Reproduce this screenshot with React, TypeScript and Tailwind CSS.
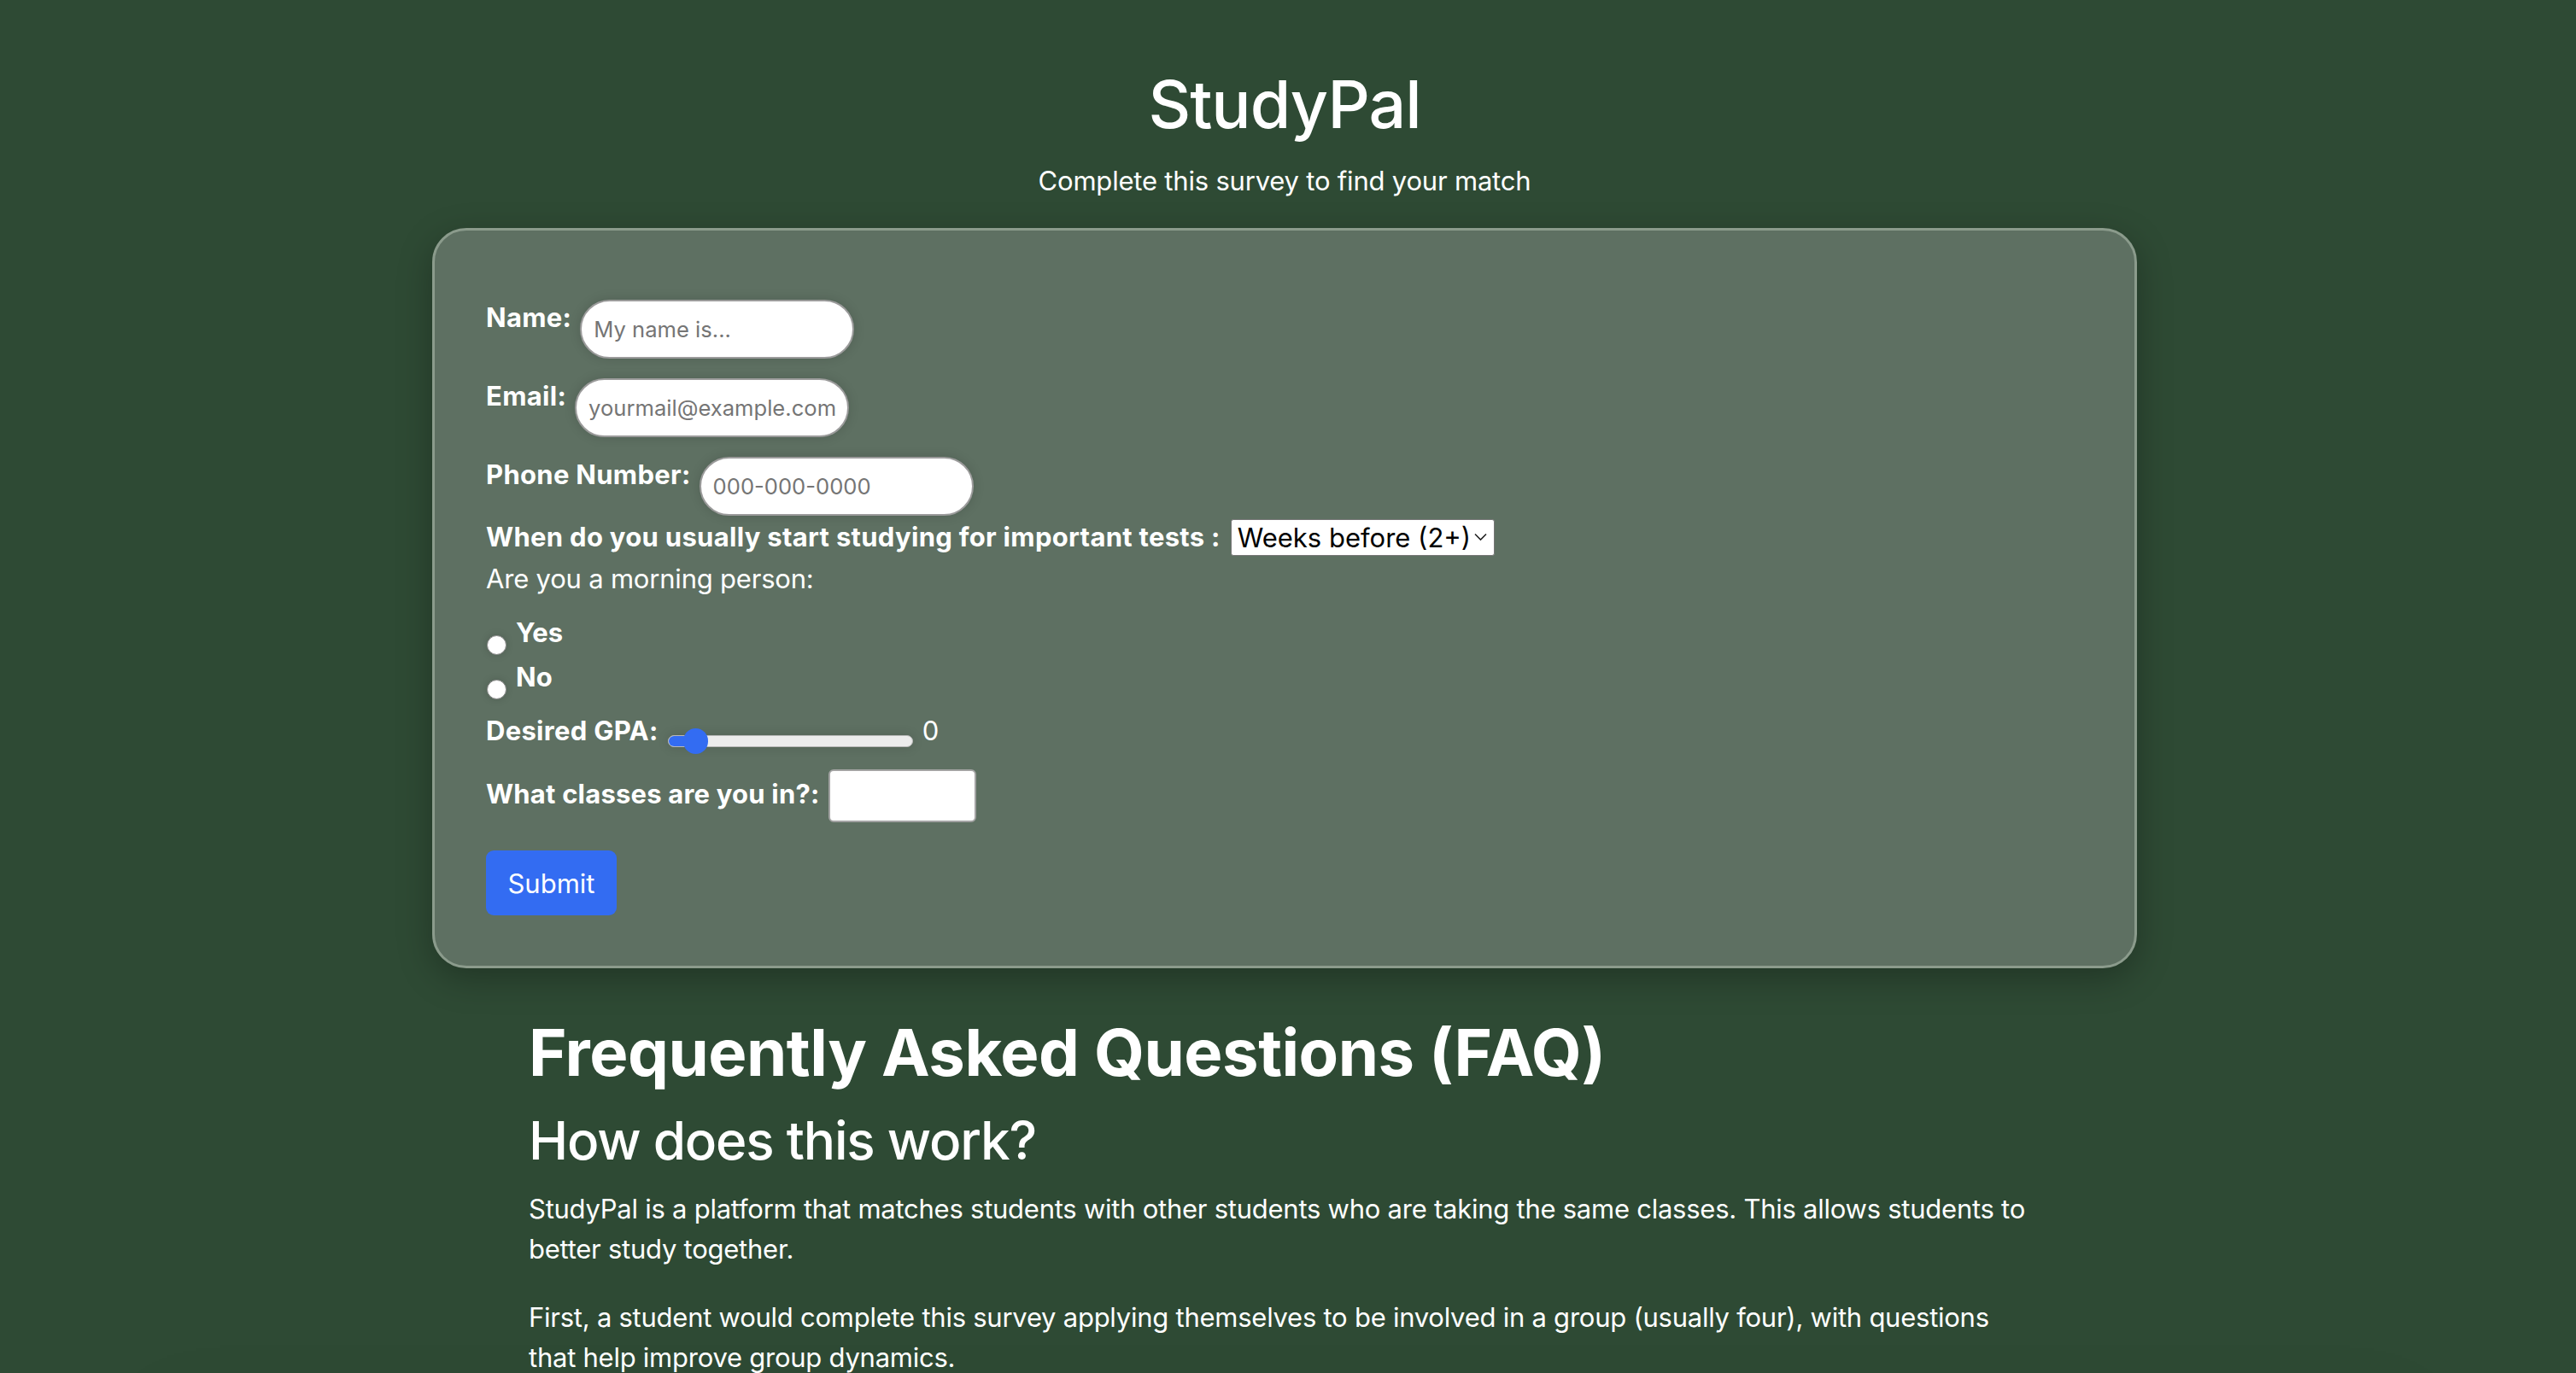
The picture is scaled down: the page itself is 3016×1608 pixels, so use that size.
import React from "react";

const inputCls =
  "h-[69px] w-[321px] rounded-full border-2 border-[#9b9b9b] bg-white px-[14px] text-[25.6px] text-black placeholder:text-[#757575] shadow-[0_0_14px_rgba(0,0,0,0.14)] outline-none";

const FormRow = ({ label, children }: { label: string; children: React.ReactNode }) => (
  <div className="flex items-start gap-[10px]">
    <label className="font-bold leading-[46px] tracking-[0.3px]">{label}</label>
    <div className="mt-[2px]">{children}</div>
  </div>
);

const Radio = ({ label }: { label: string }) => (
  <label className="flex h-[46px] items-start gap-[11px] leading-[46px] font-bold">
    <input
      type="radio"
      name="morning"
      className="mt-[26px] ml-[1px] h-[23px] w-[23px] appearance-none rounded-full border border-[#8a8a8a] bg-white shadow-[0_0_10px_rgba(0,0,0,0.15)]"
    />
    {label}
  </label>
);

const App = () => {
  return (
    <div className="min-h-screen overflow-hidden bg-[#2e4a34] pr-[8px] pb-[120px] text-white font-['Inter',sans-serif] text-[31px]">
      <header className="pt-[84px] text-center">
        <h1 className="text-[77px] font-medium leading-none tracking-[-1px]">StudyPal</h1>
        <p className="mt-[35px] leading-none tracking-[-0.2px]">Complete this survey to find your match</p>
      </header>

      <form className="mx-auto mt-[40px] flex w-[1996px] flex-col rounded-[40px] border-[3px] border-[#8b9b8c] bg-[#5e7062] pl-[60px] pt-[79px] pb-[59px] shadow-[0_12px_40px_rgba(0,0,0,0.28)]">
        <div className="flex flex-col gap-[21px]">
          <FormRow label="Name:">
            <input type="text" placeholder="My name is..." className={inputCls} />
          </FormRow>
          <FormRow label="Email:">
            <input type="email" placeholder="yourmail@example.com" className={inputCls} />
          </FormRow>
          <FormRow label="Phone Number:">
            <input type="tel" placeholder="000-000-0000" className={inputCls} />
          </FormRow>
        </div>

        <div className="mt-[2px] flex items-center gap-[12px]">
          <label className="font-bold leading-[46px] tracking-[0.3px]">
            When do you usually start studying for important tests :
          </label>
          <div className="flex h-[43px] w-[309px] items-center justify-between rounded-[3px] border border-[#767676] bg-white pl-[7px] pr-[8px] text-black">
            <span className="leading-none">Weeks before (2+)</span>
            <svg width="15" height="10" viewBox="0 0 15 10" fill="none">
              <path d="M1 1.5 7.5 8 14 1.5" stroke="#222" strokeWidth="1.6" />
            </svg>
          </div>
        </div>

        <p className="mt-[3px] leading-[46px] tracking-[-0.2px]">Are you a morning person:</p>

        <div className="mt-[17px] flex flex-col gap-[6px]">
          <Radio label="Yes" />
          <Radio label="No" />
        </div>

        <div className="mt-[17px] flex items-start gap-[11px]">
          <label className="font-bold leading-[46px] tracking-[0.3px]">Desired GPA:</label>
          <div className="relative mt-[28px] h-[14px] w-[287px] rounded-full border border-[#b9b9b9] bg-[#ececec] shadow-[0_0_14px_rgba(0,0,0,0.14)]">
            <div className="h-full w-[30px] rounded-l-full bg-[#336cf2]" />
            <div className="absolute left-[17px] top-[-9px] h-[30px] w-[29px] rounded-full bg-[#336cf2]" />
          </div>
          <span className="leading-[46px]">0</span>
        </div>

        <div className="mt-[22px] flex items-start gap-[10px]">
          <label className="mt-[6px] font-bold leading-[46px] tracking-[0.2px]">What classes are you in?:</label>
          <input
            type="text"
            className="h-[62px] w-[173px] rounded-[6px] border-2 border-[#a3a3a3] bg-white px-[8px] text-[25.6px] text-black outline-none"
          />
        </div>

        <button
          type="button"
          className="mt-[33px] h-[76px] w-[153px] rounded-[9px] bg-[#336cf2] leading-none text-white"
        >
          Submit
        </button>
      </form>

      <section className="mx-auto w-[1770px] tracking-[-0.25px]">
        <h1 className="mt-[60px] text-[76px] font-bold leading-none tracking-[-0.5px]">
          Frequently Asked Questions (FAQ)
        </h1>
        <h2 className="mt-[35px] text-[62px] font-medium leading-none tracking-[-1.2px]">How does this work?</h2>
        <p className="mt-[25px] leading-[47px]">
          StudyPal is a platform that matches students with other students who are taking the same classes. This
          allows students to better study together.
        </p>
        <p className="mt-[33px] leading-[47px]">
          First, a student would complete this survey applying themselves to be involved in a group (usually four),
          with questions that help improve group dynamics.
        </p>
      </section>

      <div className="mx-auto mt-[60px] h-[300px] w-[2600px] bg-[#2e4a34] shadow-[0_0_90px_rgba(0,0,0,0.22)]" />
    </div>
  );
};

export default App;
